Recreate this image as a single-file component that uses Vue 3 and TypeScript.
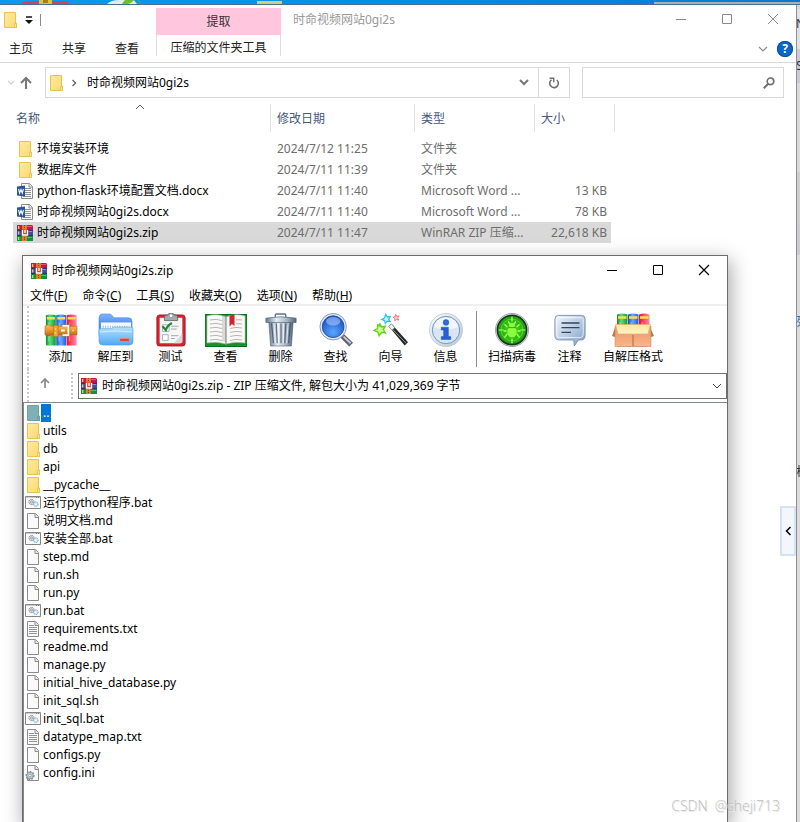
<script setup lang="ts">
import { ref } from 'vue'

interface Entry {
  icon: string
  name: string
  date: string
  type: string
  size: string
}

interface Tool {
  icon: string
  label: string
}

const ribbonTabs: string[] = ['主页', '共享', '查看']

const entries: Entry[] = [
  { icon: 'folder', name: '环境安装环境', date: '2024/7/12 11:25', type: '文件夹', size: '' },
  { icon: 'folder', name: '数据库文件', date: '2024/7/11 11:39', type: '文件夹', size: '' },
  { icon: 'word', name: 'python-flask环境配置文档.docx', date: '2024/7/11 11:40', type: 'Microsoft Word ...', size: '13 KB' },
  { icon: 'word', name: '时命视频网站0gi2s.docx', date: '2024/7/11 11:40', type: 'Microsoft Word ...', size: '78 KB' },
  { icon: 'rar', name: '时命视频网站0gi2s.zip', date: '2024/7/11 11:47', type: 'WinRAR ZIP 压缩...', size: '22,618 KB' },
]

const menus: [string, string][] = [
  ['文件', 'F'],
  ['命令', 'C'],
  ['工具', 'S'],
  ['收藏夹', 'O'],
  ['选项', 'N'],
  ['帮助', 'H'],
]

const mainTools: Tool[] = [
  { icon: 'add', label: '添加' },
  { icon: 'extract', label: '解压到' },
  { icon: 'test', label: '测试' },
  { icon: 'view', label: '查看' },
  { icon: 'trash', label: '删除' },
  { icon: 'find', label: '查找' },
  { icon: 'wizard', label: '向导' },
  { icon: 'info', label: '信息' },
]

const extraTools: Tool[] = [
  { icon: 'scan', label: '扫描病毒' },
  { icon: 'comment', label: '注释' },
  { icon: 'sfx', label: '自解压格式' },
]

const files: [string, string][] = [
  ['upfolder', '..'],
  ['folder', 'utils'],
  ['folder', 'db'],
  ['folder', 'api'],
  ['folder', '__pycache__'],
  ['bat', '运行python程序.bat'],
  ['page', '说明文档.md'],
  ['bat', '安装全部.bat'],
  ['page', 'step.md'],
  ['page', 'run.sh'],
  ['page', 'run.py'],
  ['bat', 'run.bat'],
  ['text', 'requirements.txt'],
  ['page', 'readme.md'],
  ['page', 'manage.py'],
  ['page', 'initial_hive_database.py'],
  ['page', 'init_sql.sh'],
  ['bat', 'init_sql.bat'],
  ['text', 'datatype_map.txt'],
  ['page', 'configs.py'],
  ['ini', 'config.ini'],
]

const address = ref('时命视频网站0gi2s')
const query = ref('')
const selectedEntry = ref(4)
const selectedFile = ref(0)
</script>

<template>
  <div class="desktop">
    <svg class="sprite" aria-hidden="true">
      <defs>
        <linearGradient id="gFolder" x1="0" y1="0" x2="1" y2="1">
          <stop offset="0" stop-color="#ffeaa2" /><stop offset="1" stop-color="#fbd96f" />
        </linearGradient>
        <linearGradient id="gGreen"><stop offset="0" stop-color="#0a8a2c" /><stop offset=".4" stop-color="#5fdc7c" /><stop offset="1" stop-color="#0b9a38" /></linearGradient>
        <linearGradient id="gBlue"><stop offset="0" stop-color="#1550c8" /><stop offset=".45" stop-color="#6aa8ff" /><stop offset="1" stop-color="#1c5be0" /></linearGradient>
        <linearGradient id="gRed"><stop offset="0" stop-color="#e0103a" /><stop offset=".45" stop-color="#ff4a5c" /><stop offset="1" stop-color="#ff8ab0" /></linearGradient>
        <linearGradient id="gBelt" x1="0" y1="0" x2="0" y2="1"><stop offset="0" stop-color="#f9bd55" /><stop offset=".5" stop-color="#e9982c" /><stop offset="1" stop-color="#b8640f" /></linearGradient>
        <linearGradient id="gOpen" x1="0" y1="0" x2="0" y2="1"><stop offset="0" stop-color="#b4e1ff" /><stop offset="1" stop-color="#4fa9f4" /></linearGradient>
        <linearGradient id="gBack" x1="0" y1="0" x2="0" y2="1"><stop offset="0" stop-color="#7db4ff" /><stop offset="1" stop-color="#2264dc" /></linearGradient>
        <linearGradient id="gSteel"><stop offset="0" stop-color="#65788e" /><stop offset=".35" stop-color="#e6edf4" /><stop offset=".7" stop-color="#a6b5c6" /><stop offset="1" stop-color="#536478" /></linearGradient>
        <radialGradient id="gLens" cx=".5" cy=".75" r=".7"><stop offset="0" stop-color="#5aa6ff" /><stop offset="1" stop-color="#1c50c8" /></radialGradient>
        <radialGradient id="gScan"><stop offset="0" stop-color="#4ee01c" /><stop offset="1" stop-color="#1a9f0c" /></radialGradient>
        <linearGradient id="gRing" x1="0" y1="0" x2="1" y2="1"><stop offset="0" stop-color="#fff" /><stop offset="1" stop-color="#b7c5d3" /></linearGradient>
        <linearGradient id="gNote" x1="0" y1="0" x2="1" y2="1"><stop offset="0" stop-color="#f1f6fc" /><stop offset=".55" stop-color="#b3c8e0" /><stop offset="1" stop-color="#7e9dc4" /></linearGradient>
        <linearGradient id="gBox" x1="0" y1="0" x2="0" y2="1"><stop offset="0" stop-color="#e79566" /><stop offset="1" stop-color="#fbb68a" /></linearGradient>
        <linearGradient id="gFlap" x1="0" y1="0" x2="0" y2="1"><stop offset="0" stop-color="#ffe79a" /><stop offset="1" stop-color="#fff3cb" /></linearGradient>
      </defs>

      <symbol id="i-folder" viewBox="0 0 16 16">
        <path d="M2.500 .500h11V11H14.500v4.500H2.500z" fill="url(#gFolder)" stroke="#e9c352" />
        <path d="M12.500 15.500V11.500h2v4z" fill="#ffe795" stroke="#e9c352" />
      </symbol>
      <symbol id="i-upfolder" viewBox="0 0 16 16">
        <path d="M2.500 .500h11V11H14.500v4.500H2.500z" fill="#7fb0b8" stroke="#6d9f9d" />
        <path d="M12.500 15.500V11.500h2v4z" fill="#7fb0b8" stroke="#6d9f9d" />
      </symbol>
      <symbol id="i-page" viewBox="0 0 16 16">
        <path d="M2.500 .500H10.500L13.500 3.500V15.500H2.500z" fill="#fafafa" stroke="#8c8c8c" />
        <path d="M10 1v3.500h3.500" fill="#e4e4e4" stroke="#8c8c8c" />
      </symbol>
      <symbol id="i-text" viewBox="0 0 16 16">
        <use href="#i-page" />
        <path d="M4 4.500h5M4 6.500h8M4 8.500h8M4 10.500h8M4 12.500h8" stroke="#8f9499" fill="none" />
      </symbol>
      <symbol id="i-bat" viewBox="0 0 16 16">
        <path d="M.5 1.500h15v12H.5z" fill="#fafafa" stroke="#858585" />
        <path d="M1 2.500h14" stroke="#c8ccd0" /><path d="M11 2.500h1m1 0h1" stroke="#777" />
        <circle cx="6.500" cy="7" r="2.600" fill="#e1e4e6" stroke="#777" stroke-dasharray="1.200 .6" />
        <circle cx="6.500" cy="7" r="1" fill="#fff" stroke="#777" stroke-width=".7" />
        <circle cx="10.800" cy="9.200" r="2.300" fill="#cfe6f7" stroke="#6da3cc" stroke-dasharray="1.200 .6" />
        <circle cx="10.800" cy="9.200" r=".8" fill="#fff" />
      </symbol>
      <symbol id="i-ini" viewBox="0 0 16 16">
        <use href="#i-page" />
        <circle cx="5" cy="10.500" r="3.600" fill="#b9bfc3" stroke="#82898e" stroke-width="2" stroke-dasharray="1.600 1.100" />
        <circle cx="5" cy="10.500" r="3.200" fill="#c9ced1" stroke="#82898e" stroke-width=".7" />
        <circle cx="5" cy="10.500" r="1.300" fill="#fff" stroke="#82898e" stroke-width=".7" />
      </symbol>
      <symbol id="i-word" viewBox="0 0 16 16">
        <path d="M4.500 .500H12.500L15.500 3.500V15.500H4.500z" fill="#fff" stroke="#8c8c8c" />
        <path d="M12 .500V4h3.500" fill="#eee" stroke="#8c8c8c" />
        <path d="M8 5.500h6M8 7.500h6M8 9.500h6M8 11.500h6M6 13.500h8" stroke="#8e9297" fill="none" />
        <path d="M0 3.500L8 2.500V13.500L0 12.500z" fill="#2a5699" />
        <path d="M1.600 6l1 4.200L4 6.500l1.300 3.700L6.400 6" fill="none" stroke="#fff" stroke-width="1.100" />
      </symbol>
      <symbol id="i-rar" viewBox="0 0 16 16">
        <path d="M0 0h15l1 1v4H0z" fill="#c2174f" /><path d="M10 1.500h5" stroke="#e2587f" />
        <path d="M0 5h16v6H0z" fill="#3a4db4" /><path d="M11 6.500h4" stroke="#7f98e6" />
        <path d="M0 11h16v5H0z" fill="#0d9440" /><path d="M10 12.500h5" stroke="#45c078" />
        <path d="M0 5.300h16M0 10.700h16" stroke="#3a1436" stroke-width=".7" fill="none" />
        <path d="M1.700 1v3M1.700 6.500v3M1.700 12v3" stroke="#f2d047" stroke-width="1.300" />
        <path d="M5 0h5v16H5z" fill="#dd7f25" /><path d="M7.500 0v4M7.500 12v4" stroke="#8b3e0e" stroke-dasharray="1 1" />
        <path d="M4.500 4.500h7v6.500h-7z" fill="#d0442a" />
        <path d="M5.500 5v5h5V5M8 5v3" stroke="#fff" stroke-width="1.300" fill="none" />
      </symbol>

      <symbol id="i-binders" viewBox="0 0 34 34">
        <path d="M1 1.500Q6 -.5 11.500 1.500V33.500H2Q1 33 1 32z" fill="url(#gGreen)" />
        <path d="M12 1.500Q17 -.5 22.500 1.500V33.500H12z" fill="url(#gBlue)" />
        <path d="M23 1.500Q28 -.5 33.500 1.500V32Q33.500 33 32.500 33.500H23z" fill="url(#gRed)" />
        <path d="M2 4.500h8.500M13 4.500h8.500M24 4.500h8.500" stroke="#ffe04a" stroke-width="2.500" />
        <path d="M4 9v20M15 9v20M26 9v20" stroke="#fff" stroke-opacity=".3" stroke-width="1.500" />
      </symbol>
      <symbol id="i-add" viewBox="0 0 36 36">
        <svg x="1" y="1" width="34" height="34" viewBox="0 0 34 34"><use href="#i-binders" /></svg>
        <path d="M1 14q4-3 7 0h27v9H8q-4 2.500-7 0z" fill="url(#gBelt)" stroke="#a85c10" stroke-width=".5" />
        <path d="M10 13h5v12h-5z" fill="#efa332" stroke="#b26a14" stroke-width=".6" />
        <path d="M19.500 13.500H26v10h-6.500M22 18.500h-4" fill="none" stroke="#fff" stroke-width="2.200" />
        <path d="M18.300 12.300h8.900v12.500h-8.900" fill="none" stroke="#8d6a3a" stroke-width=".6" />
        <path d="M12 17h.8M12 21h.8M30 18.500h1.500" stroke="#fff0b8" stroke-width="1.500" />
      </symbol>
      <symbol id="i-extract" viewBox="0 0 36 36">
        <path d="M0 5Q0 2 3 1h8q2 0 3 2l2 2h15q4 0 4 4v15H0z" fill="url(#gBack)" stroke="#4184e6" stroke-width=".6" />
        <path d="M2 10h32v9H2z" fill="#f4f9ff" /><path d="M4 14.500h28" stroke="#9badc2" stroke-width="2" stroke-dasharray="1 1.500" />
        <path d="M0 18q0-1.500 2-1.500h10q2 0 4-1.500h18q2 0 2 2V30q0 4-4 4H4q-4 0-4-4z" fill="url(#gOpen)" stroke="#4d9de2" stroke-width=".6" />
        <path d="M1 20q17-2 34 0" stroke="#d6f0ff" fill="none" />
        <path d="M22 27h10v3H22z" fill="#e13d2a" stroke="#ff9684" stroke-width=".6" />
      </symbol>
      <symbol id="i-test" viewBox="0 0 36 36">
        <rect x="3" y="2" width="30" height="33" rx="3" fill="#d7222f" stroke="#93101a" stroke-width=".8" />
        <path d="M6 5h24v26l-2 1H6z" fill="#f4f5f5" /><path d="M30 22l-9 10h7q2-1 2-3z" fill="#d6d9dc" />
        <path d="M11 4q0-2 4-2 0-2 3-2t3 2q4 0 4 2v4H11z" fill="#a4a9ae" stroke="#565b60" stroke-width=".8" />
        <circle cx="18" cy="3" r="1.300" fill="#fff" />
        <path d="M9 12.500h7v7H9zM9 23h6v6H9z" fill="#fff" stroke="#a8adb2" />
        <path d="M9 14l3.500 4Q14 13 19 10.500" fill="none" stroke="#1f8b35" stroke-width="2.400" />
        <path d="M18 14h8M18 17h6M18 24h8M18 27h4" stroke="#a2a7ac" />
      </symbol>
      <symbol id="i-view" viewBox="0 0 42 34">
        <path d="M0 1.500h42V33.500H0z" fill="#129327" stroke="#0a6e1b" />
        <path d="M2 3Q12 0 21 4 30 0 40 3V30Q30 28 21 31 12 28 2 30z" fill="#faf9f6" stroke="#b9b9b0" stroke-width=".6" />
        <path d="M17 3q3 0 4 2v25q-1-1-4-2z" fill="#ccc" opacity=".7" /><path d="M21 4v28" stroke="#777" />
        <path d="M5 7q6-1.500 12 .5M5 11q6-1.500 12 .5M5 15q6-1.500 12 .5M5 19q6-1.500 12 .5M5 23q6-1.500 12 .5M5 27q6-1.500 12 .5M25 15.500q6-2 12-.5M25 19.500q6-2 12-.5M25 23.500q6-2 12-.5M25 27.500q6-2 12-.5M31 7q3-.6 6 0M31 11q3-.6 6 0" fill="none" stroke="#b4b4b4" />
        <path d="M24.500 2.500l5-1V13l-2.500-2-2.500 2.500z" fill="#d4232b" />
      </symbol>
      <symbol id="i-trash" viewBox="0 0 36 36">
        <path d="M12 5V2q0-1 1-1h9q1 0 1 1v3" fill="none" stroke="#60738a" stroke-width="1.500" />
        <path d="M5 8h26l-2 27H7z" fill="url(#gSteel)" stroke="#4e5f72" stroke-width=".6" />
        <path d="M8 11l2 21M13 11l1 21M18 11v21M23 11l-1 21M28 11l-2 21" stroke="#394b60" stroke-width="1.300" opacity=".75" />
        <path d="M10.500 11l1.500 21M15.500 11v21M20.500 11v21M25.500 11L24 32" stroke="#fff" opacity=".8" />
        <path d="M2 5.500Q18 2.500 34 5.500V10H2z" fill="url(#gSteel)" stroke="#526479" stroke-width=".7" />
      </symbol>
      <symbol id="i-find" viewBox="0 0 36 36">
        <path d="M26 22l10 9.500-4 4L22.500 26z" fill="#5c6470" /><path d="M26 25l7.500 7" stroke="#c7ccd4" stroke-width="2" />
        <circle cx="15" cy="14.500" r="14" fill="#dfe8f3" stroke="#8498b2" />
        <circle cx="15" cy="14.500" r="11.500" fill="url(#gLens)" stroke="#254f9f" />
        <ellipse cx="15" cy="8.800" rx="7.500" ry="4.500" fill="#b8d2ff" opacity=".55" />
      </symbol>
      <symbol id="i-wizard" viewBox="0 0 36 36">
        <path d="M15.500 14l3-2.500L36 31l-3.500 3.500z" fill="#24272b" /><path d="M17 14.500L34 32" stroke="#aaa" stroke-width=".9" />
        <path d="M15.500 14l3-2.500 3.500 4-3 2.700z" fill="#f2f2f2" stroke="#777" stroke-width=".7" />
        <path d="M6 11l2 3.800 4-.8-2.200 3.500 2.200 3.500-4-.6L5.500 24 4 20.200 0 18.500l3.700-2L4 12.500l2.500 1.500z" fill="#d0ff93" stroke="#64d51d" stroke-width="1.500" />
        <path d="M12.500 1.500l1.500 2.700 3.200-.5-1.700 2.800 1.700 2.600-3.200-.4-2 2.400-.8-3.100-3-1.200 2.800-1.500z" fill="#c8f8ff" stroke="#22c7e9" stroke-width="1.300" />
        <path d="M23 1.500l1.200 2 2.400-.2L25 5.200l1 2.300-2.200-.8-1.800 1.500V5.800l-2-1.400 2.300-.4z" fill="#ffd2d2" stroke="#f56c6c" />
      </symbol>
      <symbol id="i-info" viewBox="0 0 36 36">
        <circle cx="18" cy="18" r="17.500" fill="url(#gRing)" stroke="#b4c2d0" stroke-width=".8" />
        <circle cx="18" cy="18" r="14.500" fill="#d8e5f3" stroke="#6c93c4" />
        <path d="M5 15Q8 5 18 5t13 10q-12 5-26 0z" fill="#fff" opacity=".65" />
        <circle cx="18" cy="10" r="3" fill="#2c6ee2" stroke="#174cac" stroke-width=".5" />
        <path d="M13 15h7.500v10H23v3H13v-3h2.500v-7H13z" fill="#2461d8" stroke="#174cac" stroke-width=".5" />
      </symbol>
      <symbol id="i-scan" viewBox="0 0 36 36">
        <circle cx="18" cy="18" r="17.500" fill="#e2e5e8" stroke="#8b9095" stroke-width=".8" />
        <circle cx="18" cy="18" r="15.500" fill="url(#gScan)" stroke="#1b3423" stroke-width="1.700" />
        <circle cx="18" cy="18" r="11.500" fill="none" stroke="#7de94d" stroke-width=".6" />
        <path d="M18 4v5M18 27v5M4 18h5M27 18h5" stroke="#b2ff77" stroke-width="1.300" />
        <path d="M13 15l-3-3M23 15l3-3M12 19H9M24 19h3M13 22l-3 4M23 22l3 4M16 12l-2-3M20 12l2-3" stroke="#a5ff66" stroke-width="1.500" fill="none" />
        <ellipse cx="18" cy="20" rx="5" ry="6" fill="#8cff41" /><circle cx="18" cy="13.500" r="3" fill="#8cff41" />
        <path d="M14 15.500h8" stroke="#319e17" />
      </symbol>
      <symbol id="i-comment" viewBox="0 0 36 36">
        <path d="M6 2.500h24q4 0 4 4v17q0 5-4 5h-3l-4.500 6.500-.5-6.500H6q-4 0-4-5v-17q0-4 4-4z" fill="url(#gNote)" stroke="#7891b5" />
        <path d="M6 5h24q2 0 2 2v15q0 4-3 4H7q-3 0-3-4V7q0-2 2-2z" fill="none" stroke="#fff" opacity=".75" />
        <path d="M9 10.500h19M9 15.500h19M9 20.500h10" stroke="#31465f" stroke-width="1.500" />
      </symbol>
      <symbol id="i-sfx" viewBox="0 0 42 34">
        <svg x="4" y="0" width="34" height="34" viewBox="0 0 34 34"><use href="#i-binders" /></svg>
        <path d="M4 12L0 23l3 1 2-4zM37 12l5 11-3 1-3-4z" fill="#b97851" />
        <path d="M3 13h36v20.500H3z" fill="url(#gBox)" stroke="#cf7c4d" stroke-width=".5" />
        <path d="M3.500 11.500h35L36 21H6z" fill="url(#gFlap)" stroke="#e3b06e" stroke-width=".7" />
        <path d="M21 22v11.500" stroke="#b7673a" />
      </symbol>
    </svg>

    <div class="wallpaper" aria-hidden="true">
      <svg class="wall-art" width="290" height="5" viewBox="0 0 290 5">
        <path d="M22 2h46v3H22z" fill="#cf416b" /><path d="M39 0h13v5H39z" fill="#e0c13e" /><path d="M43 1h5v3h-5z" fill="#a17f20" />
        <path d="M107 5q4-4 12-4l4-1h10l4 5z" fill="#e5ece8" /><path d="M122 5q2-4 5-5h8q-3 4-7 5z" fill="#73bd2d" /><path d="M137 0q4 2 2 5" fill="none" stroke="#4cae5c" />
        <path d="M257 2h25v3h-25z" fill="#d8ca80" />
      </svg>
      <span class="edge"></span>
    </div>

    <main class="explorer">
      <header class="ribbon">
        <div class="quick">
          <svg class="ic"><use href="#i-folder" /></svg>
          <button type="button" class="plain" aria-label="自定义快速访问工具栏">
            <svg width="8" height="8" viewBox="0 0 8 8"><path d="M1 1h6" stroke="#111" stroke-width="1.500" /><path d="M0 4h8L4 8z" fill="#111" /></svg>
          </button>
          <span class="bar"></span>
        </div>
        <button type="button" class="pink">提取</button>
        <div class="caption">时命视频网站0gi2s</div>
        <div class="winbtns light">
          <button type="button" aria-label="最小化"><svg width="12" height="12"><path d="M1 6.500h10" stroke="currentColor" /></svg></button>
          <button type="button" aria-label="最大化"><svg width="12" height="12"><path d="M1.500 1.500h9v9h-9z" fill="none" stroke="currentColor" /></svg></button>
          <button type="button" aria-label="关闭"><svg width="12" height="12"><path d="M1 1l10 10M11 1L1 11" stroke="currentColor" /></svg></button>
        </div>
        <nav class="tabs">
          <button v-for="t in ribbonTabs" :key="t" type="button" class="plain">{{ t }}</button>
        </nav>
        <button type="button" class="tooltab">压缩的文件夹工具</button>
        <div class="helpers">
          <button type="button" class="plain" aria-label="展开功能区"><svg width="10" height="6"><path d="M1 1l4 4 4-4" fill="none" stroke="#8b8b8b" stroke-width="1.200" /></svg></button>
          <button type="button" class="help" aria-label="帮助">?</button>
        </div>
      </header>

      <div class="addr-row">
        <div class="nav-arrows">
          <svg class="recent" width="8" height="6"><path d="M1 1l3 3 3-3" fill="none" stroke="#cfcfcf" stroke-width="1.200" /></svg>
          <button type="button" class="plain" aria-label="上移"><svg width="12" height="14"><path d="M6 13V2M1 7l5-5 5 5" fill="none" stroke="#777" stroke-width="2" /></svg></button>
        </div>
        <div class="addr">
          <svg class="ic"><use href="#i-folder" /></svg>
          <svg class="crumb" width="6" height="8"><path d="M1.500 1l3 3-3 3" fill="none" stroke="#666" stroke-width="1.400" /></svg>
          <input v-model="address" type="text" aria-label="地址" />
          <button type="button" class="plain drop" aria-label="以前的位置"><svg width="10" height="7"><path d="M1 1l4 4 4-4" fill="none" stroke="#777" stroke-width="2" /></svg></button>
          <button type="button" class="plain refresh" aria-label="刷新">
            <svg width="12" height="12" viewBox="0 0 12 12"><path d="M3.500 2.800A4.300 4.300 0 1 0 8.800 3" fill="none" stroke="#707070" stroke-width="1.600" /><path d="M1.500 1.300h4.200v4" fill="none" stroke="#707070" stroke-width="1.500" /></svg>
          </button>
        </div>
        <div class="search">
          <input v-model="query" type="search" aria-label="搜索" />
          <svg width="12" height="12" viewBox="0 0 12 12"><circle cx="7.500" cy="4.300" r="3.300" fill="none" stroke="#6d6d6d" stroke-width="1.600" /><path d="M5.200 6.800L.8 11.200" stroke="#6d6d6d" stroke-width="2" /></svg>
        </div>
      </div>

      <table class="files">
        <colgroup><col class="c-name" /><col class="c-date" /><col class="c-type" /><col class="c-size" /><col class="c-end" /></colgroup>
        <thead>
          <tr>
            <th scope="col"><svg class="sort" width="10" height="6"><path d="M1 5l4-4 4 4" fill="none" stroke="#666" /></svg>名称</th>
            <th scope="col">修改日期</th>
            <th scope="col">类型</th>
            <th scope="col" colspan="2">大小</th>
          </tr>
        </thead>
        <tbody>
          <tr v-for="(e, i) in entries" :key="e.name" :class="{ on: i === selectedEntry }" @click="selectedEntry = i">
            <td class="name"><span><svg class="ic"><use :href="'#i-' + e.icon" /></svg>{{ e.name }}</span></td>
            <td>{{ e.date }}</td>
            <td>{{ e.type }}</td>
            <td class="num">{{ e.size }}</td>
          </tr>
        </tbody>
      </table>
      <button type="button" class="handle" aria-label="展开侧栏"><svg width="6" height="10"><path d="M5.500 1L1.500 5l4 4" fill="none" stroke="#000" stroke-width="1.500" /></svg></button>
    </main>

    <aside class="behind"><span>N</span><span>S</span><a href="#">列</a><span>析</span></aside>

    <section class="archive">
      <header class="a-title">
        <svg class="ic"><use href="#i-rar" /></svg>
        <h1>时命视频网站0gi2s.zip</h1>
        <div class="winbtns">
          <button type="button" aria-label="最小化"><svg width="12" height="12"><path d="M1 6.500h10" stroke="currentColor" /></svg></button>
          <button type="button" aria-label="最大化"><svg width="12" height="12"><path d="M1.500 1.500h9v9h-9z" fill="none" stroke="currentColor" /></svg></button>
          <button type="button" aria-label="关闭"><svg width="12" height="12"><path d="M1 1l10 10M11 1L1 11" stroke="currentColor" stroke-width="1.200" /></svg></button>
        </div>
      </header>
      <nav class="menu">
        <button v-for="m in menus" :key="m[1]" type="button" class="plain">{{ m[0] }}(<u>{{ m[1] }}</u>)</button>
      </nav>
      <div class="toolbar">
        <button v-for="t in mainTools" :key="t.icon" type="button" class="tool">
          <svg class="big"><use :href="'#i-' + t.icon" /></svg>{{ t.label }}
        </button>
        <span class="split"></span>
        <button v-for="t in extraTools" :key="t.icon" type="button" class="tool">
          <svg class="big"><use :href="'#i-' + t.icon" /></svg>{{ t.label }}
        </button>
      </div>
      <div class="a-path">
        <button type="button" class="plain up" aria-label="上一级"><svg width="12" height="12"><path d="M6 11V2M2 6l4-4 4 4" fill="none" stroke="#8a8a8a" stroke-width="1.700" /></svg></button>
        <label class="combo">
          <svg class="ic"><use href="#i-rar" /></svg>
          <select aria-label="路径"><option>时命视频网站0gi2s.zip - ZIP 压缩文件, 解包大小为 41,029,369 字节</option></select>
          <svg class="caret" width="10" height="6"><path d="M1 1l4 4 4-4" fill="none" stroke="#444" /></svg>
        </label>
      </div>
      <ul class="list">
        <li v-for="(f, i) in files" :key="f[1]" :class="{ on: i === selectedFile }" @click="selectedFile = i">
          <svg class="ic"><use :href="'#i-' + f[0]" /></svg><span>{{ f[1] }}</span>
        </li>
      </ul>
    </section>

    <div class="mark">CSDN&nbsp; @sheji713</div>
  </div>
</template>

<style>
body {
  margin: 0;
}
</style>

<style scoped>
.desktop {
  position: relative;
  display: grid;
  grid-template-columns: 1fr 3px;
  grid-template-rows: 5px 1fr;
  min-height: 100vh;
  overflow: hidden;
  background: #fff;
  color: #000;
  font: 12px/18px "Noto Sans", "Noto Sans CJK SC", sans-serif;
}
.desktop * {
  box-sizing: border-box;
}
.sprite {
  position: absolute;
  width: 0;
  height: 0;
}
button,
input,
select {
  margin: 0;
  padding: 0;
  border: 0;
  border-radius: 0;
  background: none;
  color: inherit;
  font: inherit;
  outline: none;
}
button svg {
  display: block;
}
svg {
  flex: none;
}
.ic {
  width: 16px;
  height: 16px;
}
.plain {
  display: flex;
  align-items: center;
  justify-content: center;
  white-space: nowrap;
}
.wallpaper {
  display: flex;
  align-items: flex-end;
  justify-content: space-between;
  grid-column: 1 / -1;
  border-bottom: 1px solid #4a6f8c;
  background: linear-gradient(90deg, #0a9be8, #0090e0 50%, #0a78d2);
}
.wall-art {
  display: block;
}
.edge {
  width: 146px;
  height: 2px;
  background: #a9b0b6;
}
.explorer {
  position: relative;
  min-width: 0;
  border-right: 1px solid #8f8f8f;
  background: #fff;
}
.ribbon {
  display: grid;
  grid-template-columns: 156px 125px 1fr auto;
  grid-template-rows: 30px 27px;
  border-bottom: 1px solid #dadbdc;
}
.quick {
  display: flex;
  align-items: center;
  gap: 7px;
  padding-left: 2px;
}
.quick .bar {
  width: 1px;
  height: 12px;
  background: #8a8a8a;
}
.pink {
  margin-top: 3px;
  background: #ffc6de;
  color: #333;
}
.caption {
  padding-left: 12px;
  line-height: 30px;
  color: #999;
}
.winbtns {
  display: flex;
  align-self: start;
}
.winbtns button {
  display: flex;
  align-items: center;
  justify-content: center;
  width: 46px;
  height: 28px;
}
.light {
  color: #8a8a8a;
}
.tabs {
  display: flex;
  gap: 29px;
  padding-left: 9px;
  color: #222;
}
.tooltab {
  margin-bottom: 6px;
  padding-top: 4px;
  border: solid #dcdcdc;
  border-width: 0 1px;
  color: #222;
}
.helpers {
  grid-column: 3 / -1;
  display: flex;
  align-items: center;
  justify-content: flex-end;
  gap: 9px;
  padding-right: 3px;
}
.help {
  width: 16px;
  height: 16px;
  border-radius: 50%;
  background: #0868c8;
  box-shadow: inset 0 0 0 1px #07529f;
  color: #fff;
  font-weight: 700;
  line-height: 16px;
}
.addr-row {
  display: grid;
  grid-template-columns: 26px minmax(0, 525fr) minmax(0, 202fr);
  gap: 12px;
  height: 41px;
  padding: 4px 12px 6px 7px;
}
.nav-arrows {
  display: flex;
  align-items: center;
  justify-content: space-between;
  padding-right: 1px;
}
.nav-arrows svg {
  display: block;
}
.addr {
  display: flex;
  align-items: center;
  padding-left: 2px;
  border: 1px solid #d9d9d9;
}
.addr .crumb {
  margin: 0 10px 0 7px;
}
.addr input {
  flex: 1;
  min-width: 0;
}
.drop {
  width: 28px;
  height: 29px;
}
.refresh {
  width: 31px;
  height: 29px;
  border-left: 1px solid #d9d9d9;
}
.search {
  display: flex;
  align-items: center;
  padding: 0 8px;
  border: 1px solid #d9d9d9;
}
.search input {
  flex: 1;
  min-width: 0;
  appearance: none;
}
.files {
  width: 602px;
  margin-left: 13px;
  border-collapse: separate;
  border-spacing: 0;
  table-layout: fixed;
}
.c-name {
  width: 258px;
}
.c-date {
  width: 144px;
}
.c-type {
  width: 120px;
}
.c-size {
  width: 76px;
}
.c-end {
  width: 4px;
}
.files th {
  position: relative;
  height: 28px;
  padding: 2px 6px 0;
  border-right: 1px solid #e2e2e2;
  color: #45597a;
  font-weight: 400;
  text-align: left;
}
.files th:first-child {
  padding-left: 3px;
}
.sort {
  position: absolute;
  top: 0;
  left: 122px;
}
.files tbody::before {
  content: "";
  display: block;
  height: 6px;
}
.files td {
  height: 21px;
  padding: 0 4px 0 6px;
  color: #6d6d6d;
  white-space: nowrap;
}
.files td.name {
  padding-left: 4px;
  color: #000;
}
.name span {
  display: flex;
  align-items: center;
  gap: 4px;
}
.files td.num {
  text-align: right;
}
.files .on td {
  background: #d9d9d9;
}
.handle {
  position: absolute;
  top: 501px;
  right: 0;
  display: flex;
  align-items: center;
  justify-content: center;
  width: 16px;
  height: 50px;
  border: 2px solid #d3e3f5;
  background: #f3f7fd;
}
.behind {
  display: flex;
  flex-direction: column;
  overflow: hidden;
  background: linear-gradient(#d4d8de 0 4px, #dfe3e9 4px 44px, #c9cad5 44px 78px, #dadada 78px 167px, #cfcfcf 167px 220px, #cbccd1 220px 250px, #dcdcdc 250px);
  color: #333;
}
.behind span,
.behind a {
  width: 14px;
  margin-left: -1px;
}
.behind span:nth-child(1) {
  margin-top: 10px;
}
.behind span:nth-child(2) {
  margin-top: 24px;
}
.behind a {
  margin-top: 238px;
  color: #2277c5;
  text-decoration: none;
}
.behind span:nth-child(4) {
  margin-top: 132px;
}
.archive {
  position: absolute;
  top: 255px;
  right: 72px;
  bottom: 0;
  left: 22px;
  display: flex;
  flex-direction: column;
  border: 1px solid #6c6c6c;
  border-bottom: 0;
  background: #fff;
  box-shadow: 2px 6px 18px 1px rgba(0, 0, 0, 0.34);
}
.a-title {
  display: flex;
  align-items: center;
  gap: 5px;
  height: 30px;
  padding-left: 8px;
}
.a-title h1 {
  flex: 1;
  margin: 0;
  font-size: 12px;
  font-weight: 400;
}
.menu {
  display: flex;
  gap: 15px;
  height: 20px;
  padding-left: 7px;
  border-bottom: 2px solid #f0f0f0;
}
.menu button {
  padding-top: 2px;
}
.toolbar {
  display: flex;
  height: 63px;
  margin-left: 4px;
  padding: 5px 0 0 4px;
  border-left: 2px dotted #c8c8c8;
}
.tool {
  display: flex;
  flex-direction: column;
  align-items: center;
  min-width: 55px;
  padding: 0 6px;
  white-space: nowrap;
}
.big {
  width: 42px;
  height: 34px;
  margin: 2px 0 1px;
}
.split {
  width: 1px;
  height: 56px;
  margin: 0 5px 0 3px;
  background: #8d8d8d;
}
.a-path {
  display: flex;
  height: 33px;
  margin-left: 4px;
  padding: 4px 0 3px;
  border-left: 2px dotted #c8c8c8;
}
.up {
  width: 44px;
  padding: 0 10px 6px 0;
  border-right: 2px dotted #c8c8c8;
}
.combo {
  display: flex;
  flex: 1;
  align-items: center;
  gap: 5px;
  min-width: 0;
  margin-left: 5px;
  padding: 0 4px 0 2px;
  border: 1px solid #707070;
}
.combo select {
  flex: 1;
  min-width: 0;
  appearance: none;
}
.list {
  flex: 1;
  margin: 0;
  padding: 1px 0 0 1px;
  border: 1px solid #828790;
  border-width: 1px 0 0 1px;
  list-style: none;
}
.list li {
  display: flex;
  align-items: center;
  height: 18px;
}
.list span {
  padding: 0 2px;
}
.list .on span {
  background: #0078d7;
  color: #fff;
}
.mark {
  position: absolute;
  right: 20px;
  bottom: 6px;
  color: #bdbdbd;
  font: 300 14px/20px "Open Sans", sans-serif;
  text-shadow: 1px 1px 0 #e8e8e8;
}
</style>
